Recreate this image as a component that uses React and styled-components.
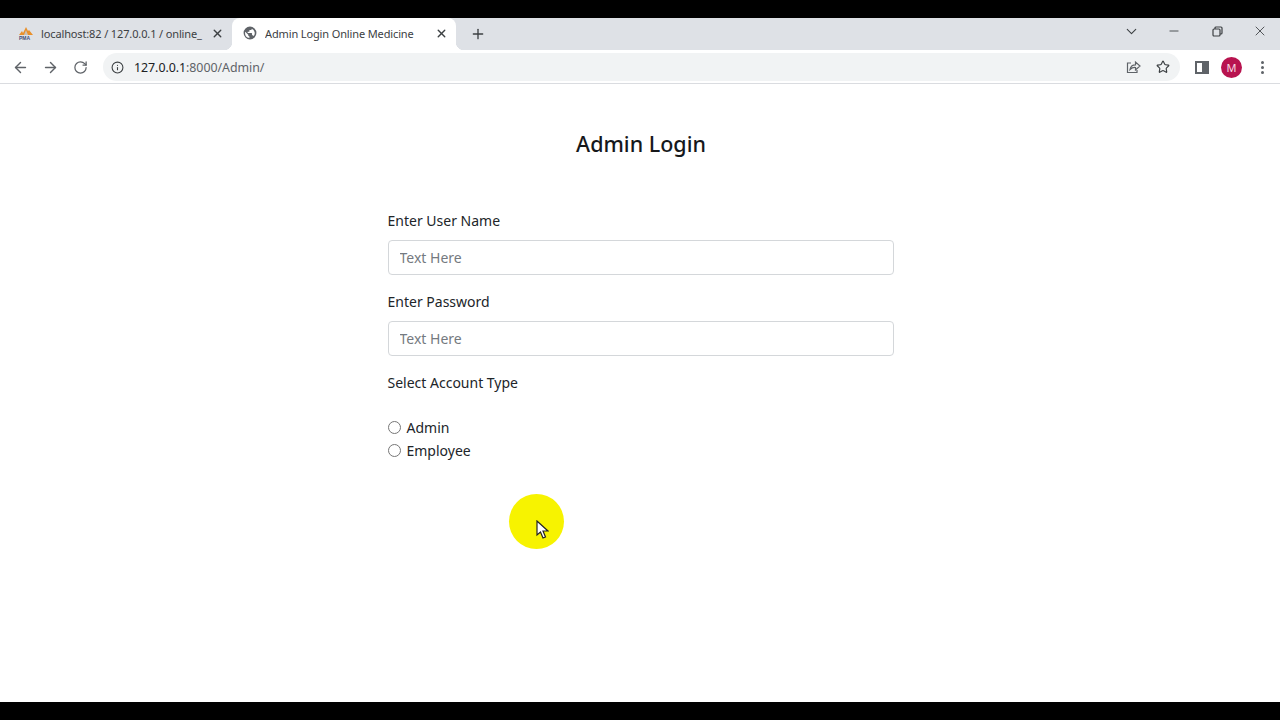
import React from "react";
import styled, { createGlobalStyle } from "styled-components";
import { ArrowLeft, ArrowRight, RotateCw, Info, Plus, X, ChevronDown, Minus, Star } from "lucide-react";

const Global = createGlobalStyle`
  html, body { margin: 0; padding: 0; background: #000; }
  body { font-family: "Noto Sans", "Open Sans", sans-serif; }
`;

const Screen = styled.div`
  width: 1280px;
  height: 720px;
  display: flex;
  flex-direction: column;
  background: #000;
  overflow: hidden;
  padding: 18px 0;
  box-sizing: border-box;
`;

const TabStrip = styled.div`
  height: 32px;
  background: #dee1e6;
  display: flex;
  align-items: flex-end;
  padding-left: 8px;
  flex-shrink: 0;
`;

const Tab = styled.div`
  position: relative;
  width: 224px;
  height: 32px;
  box-sizing: border-box;
  display: flex;
  align-items: center;
  padding: 0 8px 2px ${(p) => (p.$active ? 11 : 10)}px;
  background: ${(p) => (p.$active ? "#fff" : "transparent")};
  border-radius: 8px 8px 0 0;
  font-size: 11px;
  color: #3c4043;

  ${(p) =>
    p.$active &&
    `
    &::before, &::after {
      content: "";
      position: absolute;
      bottom: 0;
      width: 8px;
      height: 8px;
    }
    &::before {
      left: -8px;
      background: radial-gradient(circle at 0 0, transparent 8px, #fff 8.5px);
    }
    &::after {
      right: -8px;
      background: radial-gradient(circle at 100% 0, transparent 8px, #fff 8.5px);
    }
  `}
`;

const TabTitle = styled.span`
  flex: 1;
  margin: 0 ${(p) => p.$after}px 0 ${(p) => p.$gap}px;
  white-space: nowrap;
  overflow: hidden;
  letter-spacing: -0.13px;
`;

const NewTab = styled.div`
  width: 32px;
  height: 32px;
  margin-left: 6px;
  display: flex;
  align-items: center;
  justify-content: center;
  color: #3c4043;
`;

const WindowControls = styled.div`
  margin-left: auto;
  height: 32px;
  display: flex;
  align-items: flex-start;
  color: #3c4043;
`;

const WindowButton = styled.div`
  width: ${(p) => p.$width}px;
  height: 26px;
  display: flex;
  align-items: center;
  justify-content: center;
`;

const Toolbar = styled.div`
  height: 34px;
  box-sizing: border-box;
  background: #fff;
  border-bottom: 1px solid #dadce0;
  display: flex;
  align-items: center;
  padding: 1px 3px 0 5px;
  flex-shrink: 0;
  color: #5f6368;
`;

const NavButton = styled.div`
  width: 30px;
  height: 28px;
  display: flex;
  align-items: center;
  justify-content: center;
`;

const Omnibox = styled.div`
  width: 1077px;
  height: 28px;
  margin-left: 8px;
  padding: 0 10px 0 8px;
  box-sizing: border-box;
  background: #f1f3f4;
  border-radius: 14px;
  display: flex;
  align-items: center;
  font-size: 12.4px;
  color: #202124;
`;

const Url = styled.span`
  margin-left: 10px;
  letter-spacing: -0.05px;
`;

const UrlRest = styled.span`
  color: #5f6368;
`;

const OmniIcons = styled.div`
  margin-left: auto;
  display: flex;
  align-items: center;
  gap: 15px;
  color: #5f6368;
`;

const ToolbarRight = styled.div`
  margin-left: auto;
  display: flex;
  align-items: center;
`;

const SidePanelIcon = styled.div`
  width: 14px;
  height: 13px;
  box-sizing: border-box;
  border: 2px solid #5f6368;
  border-right-width: 7px;
  margin-right: 12px;
`;

const Avatar = styled.div`
  width: 21px;
  height: 21px;
  border-radius: 50%;
  background: #b8134f;
  color: #f6d8e2;
  font-size: 11px;
  display: flex;
  align-items: center;
  justify-content: center;
`;

const Kebab = styled.div`
  width: 30px;
  margin-left: 5px;
  display: flex;
  flex-direction: column;
  align-items: center;
  gap: 2px;

  span {
    width: 3px;
    height: 3px;
    border-radius: 50%;
    background: #5f6368;
  }
`;

const Page = styled.main`
  position: relative;
  flex: 1;
  background: #fff;
  display: flex;
  flex-direction: column;
  align-items: center;
  color: #212529;
`;

const Title = styled.h1`
  margin: 45px 0 0 2px;
  font-size: 21.5px;
  line-height: 30px;
  font-weight: 500;
  color: #16181b;
`;

const Form = styled.form`
  width: 506px;
  margin: 51px 0 0 1px;
  display: flex;
  flex-direction: column;
`;

const Label = styled.label`
  font-size: 14px;
  line-height: 21px;
  margin-bottom: 9px;
`;

const Input = styled.input`
  width: 100%;
  height: 35px;
  box-sizing: border-box;
  margin-bottom: 16px;
  padding: 0 11px;
  border: 1px solid #d4d7da;
  border-radius: 4px;
  font: 14px "Noto Sans", sans-serif;
  outline: none;
  &::placeholder {
    color: #757a80;
    opacity: 1;
  }
`;

const AccountLabel = styled(Label)`
  margin-bottom: 8px;
`;

const RadioGroup = styled.div`
  margin-top: 15px;
  display: flex;
  flex-direction: column;
`;

const RadioRow = styled.label`
  height: 23px;
  display: flex;
  align-items: center;
  font-size: 14px;
`;

const Radio = styled.input`
  width: 13px;
  height: 13px;
  margin: 0 6px 1px 0;
  flex-shrink: 0;
`;

const CursorSpot = styled.div`
  position: absolute;
  left: 509px;
  top: 410px;
  width: 55px;
  height: 55px;
  border-radius: 50%;
  background: #f7f300;
`;

const CursorArrow = styled.svg`
  position: absolute;
  left: 27px;
  top: 26px;
`;

const PmaIcon = () => (
  <svg width="16" height="14" viewBox="0 0 16 14">
    <path d="M1 9 L4 5 L5 7 L8 1 L10 5 L11 4 L15 9 Z" fill="#e8902c" />
    <path d="M6 9 L8 4 L10 9 Z" fill="#c9c3b8" />
    <text x="1" y="13.5" fontSize="5" fontWeight="700" fill="#44507a" fontFamily="Liberation Sans">PMA</text>
  </svg>
);

const GlobeIcon = () => (
  <svg width="14" height="14" viewBox="0 0 24 24">
    <path fill="#5f6368" d="M12 1a11 11 0 1 0 0 22 11 11 0 0 0 0-22zM3.500 12c0-.8.1-1.500.3-2.200L9 15v1c0 1.100.9 2 2 2v2.400A8.500 8.500 0 0 1 3.500 12zm14.800 5.600c-.3-.8-1-1.600-1.800-1.600h-1v-3c0-.6-.4-1-1-1H8v-2h2c.6 0 1-.4 1-1V7h2c1.100 0 2-.9 2-2v-.4a8.500 8.500 0 0 1 3.300 13z" />
  </svg>
);

const RestoreIcon = () => (
  <svg width="11" height="11" viewBox="0 0 11 11" fill="none" stroke="#3c4043" strokeWidth="1.200">
    <rect x="1" y="3" width="7" height="7" rx="1" />
    <path d="M3 3V2a1 1 0 0 1 1-1h5a1 1 0 0 1 1 1v5a1 1 0 0 1-1 1H8" />
  </svg>
);

const ShareIcon = () => (
  <svg width="15" height="14" viewBox="0 0 15 14" fill="none" stroke="#5f6368" strokeWidth="1.200">
    <path d="M5 3H1.500v9.500H11V10" />
    <path d="M4 9.500C4.500 6.500 6.500 4.800 9.500 4.800V2l4.500 4-4.500 4V7.500C7.500 7.300 5.500 8 4 9.500z" />
  </svg>
);

const App = () => {
  return (
    <Screen>
      <Global />
      <TabStrip>
        <Tab>
          <PmaIcon />
          <TabTitle $gap={7} $after={6}>localhost:82 / 127.0.0.1 / online_</TabTitle>
          <X size={13} strokeWidth={2.500} color="#3c4043" />
        </Tab>
        <Tab $active>
          <GlobeIcon />
          <TabTitle $gap={8} $after={0}>Admin Login Online Medicine</TabTitle>
          <X size={13} strokeWidth={2.500} color="#3c4043" />
        </Tab>
        <NewTab>
          <Plus size={16} strokeWidth={2} />
        </NewTab>
        <WindowControls>
          <WindowButton $width={46}>
            <ChevronDown size={17} strokeWidth={1.500} />
          </WindowButton>
          <WindowButton $width={40}>
            <Minus size={14} strokeWidth={1.500} />
          </WindowButton>
          <WindowButton $width={46}>
            <RestoreIcon />
          </WindowButton>
          <WindowButton $width={40}>
            <X size={16} strokeWidth={1.300} />
          </WindowButton>
        </WindowControls>
      </TabStrip>
      <Toolbar>
        <NavButton>
          <ArrowLeft size={17} strokeWidth={2} />
        </NavButton>
        <NavButton>
          <ArrowRight size={17} strokeWidth={2} />
        </NavButton>
        <NavButton>
          <RotateCw size={15} strokeWidth={2} />
        </NavButton>
        <Omnibox>
          <Info size={13} strokeWidth={2} color="#3c4043" />
          <Url>
            127.0.0.1<UrlRest>:8000/Admin/</UrlRest>
          </Url>
          <OmniIcons>
            <ShareIcon />
            <Star size={14} strokeWidth={2} color="#3c4043" />
          </OmniIcons>
        </Omnibox>
        <ToolbarRight>
          <SidePanelIcon />
          <Avatar>M</Avatar>
          <Kebab>
            <span />
            <span />
            <span />
          </Kebab>
        </ToolbarRight>
      </Toolbar>
      <Page>
        <Title>Admin Login</Title>
        <Form>
          <Label>Enter User Name</Label>
          <Input placeholder="Text Here" />
          <Label>Enter Password</Label>
          <Input placeholder="Text Here" />
          <AccountLabel>Select Account Type</AccountLabel>
          <RadioGroup>
            <RadioRow>
              <Radio type="radio" name="type" />
              Admin
            </RadioRow>
            <RadioRow>
              <Radio type="radio" name="type" />
              Employee
            </RadioRow>
          </RadioGroup>
        </Form>
        <CursorSpot>
          <CursorArrow width="13" height="20" viewBox="0 0 13 20">
            <path d="M1 1 L1 15 L4.500 12 L7 18 L9.500 17 L7 11 L12 11 Z" fill="#fff" stroke="#222" strokeWidth="1.200" />
          </CursorArrow>
        </CursorSpot>
      </Page>
    </Screen>
  );
};

export default App;
